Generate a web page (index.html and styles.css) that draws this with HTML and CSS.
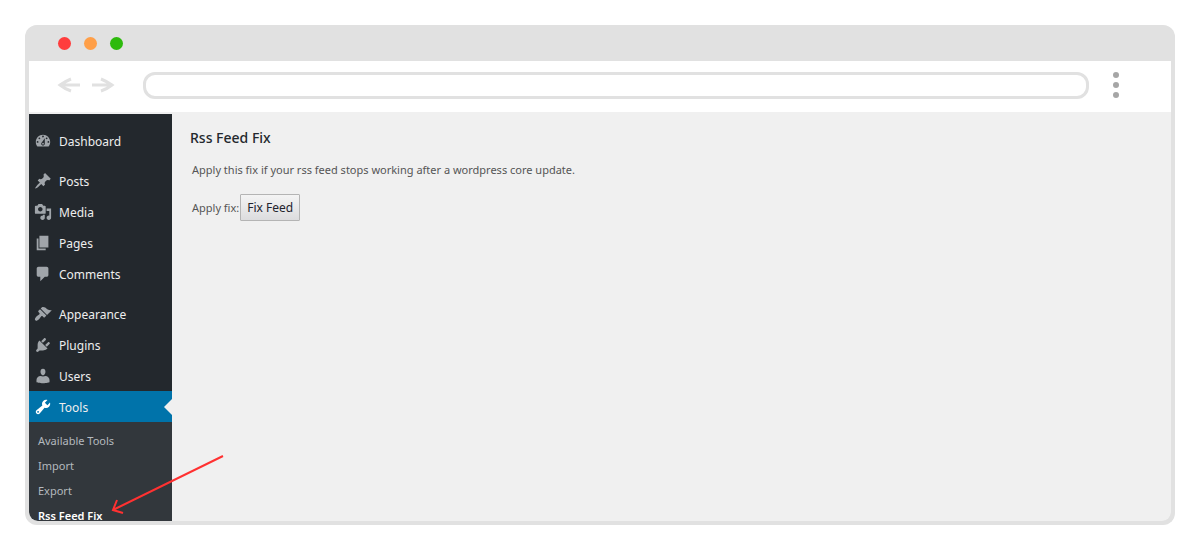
FILE: index.html
```html
<!DOCTYPE html>
<html lang="en">
<head>
  <meta charset="UTF-8">
  <meta name="viewport" content="width=device-width, initial-scale=1.0">
  <title>Rss Feed Fix</title>
  <link rel="stylesheet" href="styles.css">
</head>
<body>
  <div class="browser">
    <div class="titlebar">
      <span class="light red"></span>
      <span class="light orange"></span>
      <span class="light green"></span>
    </div>

    <div class="toolbar">
      <button class="nav" type="button" aria-label="Back">
        <svg width="24" height="16" viewBox="0 0 24 16"><path d="M23 8H3M14 2 Q9 4 3 8 Q8 12 14 14"/></svg>
      </button>
      <button class="nav" type="button" aria-label="Forward">
        <svg width="24" height="16" viewBox="0 0 24 16"><path d="M1 8H21M10 2 Q15 4 21 8 Q16 12 10 14"/></svg>
      </button>
      <input class="address" type="text" aria-label="Address">
      <button class="more" type="button" aria-label="More">
        <span></span><span></span><span></span>
      </button>
    </div>

    <div class="page">
      <nav class="sidebar">
        <ul class="menu">
          <li><a href="#">
            <svg viewBox="0 0 20 20"><path fill-rule="evenodd" d="M3.760 16h12.480c1.100-1.370 1.760-3.110 1.760-5 0-4.420-3.580-8-8-8s-8 3.580-8 8c0 1.890.66 3.630 1.760 5zM10 4c.55 0 1 .45 1 1s-.45 1-1 1-1-.45-1-1 .45-1 1-1zM6 6c.55 0 1 .45 1 1s-.45 1-1 1-1-.45-1-1 .45-1 1-1zm8 0c.55 0 1 .45 1 1s-.45 1-1 1-1-.45-1-1 .45-1 1-1zm-5.370 5.550L12 7v6c0 1.100-.9 2-2 2s-2-.9-2-2c0-.57.24-1.080.63-1.450zM4 10c.55 0 1 .45 1 1s-.45 1-1 1-1-.45-1-1 .45-1 1-1zm12 0c.55 0 1 .45 1 1s-.45 1-1 1-1-.45-1-1 .45-1 1-1zm-5 3c0-.55-.45-1-1-1s-1 .45-1 1 .45 1 1 1 1-.45 1-1z"/></svg>
            Dashboard</a></li>
          <li class="group"><a href="#">
            <svg viewBox="0 0 20 20"><path d="M10.440 3.020l1.820-1.820 6.360 6.350-1.830 1.820c-1.050-.68-2.480-.57-3.410.36l-.75.75c-.92.93-1.040 2.350-.35 3.410l-1.830 1.820-2.410-2.410-2.800 2.790c-.42.42-3.380 2.710-3.800 2.290s1.860-3.390 2.280-3.810l2.790-2.790L4.100 9.360l1.830-1.820c1.050.69 2.480.57 3.400-.36l.75-.75c.93-.92 1.050-2.350.36-3.410z"/></svg>
            Posts</a></li>
          <li><a href="#">
            <svg viewBox="0 0 20 20"><path fill-rule="evenodd" d="M13 11V4c0-.55-.45-1-1-1h-1.670L9 1H5L3.670 3H2c-.55 0-1 .45-1 1v7c0 .55.45 1 1 1h10c.55 0 1-.45 1-1zM7 4.500c1.380 0 2.500 1.120 2.500 2.500S8.380 9.500 7 9.500 4.500 8.380 4.500 7 5.620 4.500 7 4.500zM14 6h5v10.500c0 1.380-1.120 2.500-2.500 2.500S14 17.880 14 16.500s1.120-2.500 2.500-2.500c.17 0 .34.02.5.05V9h-3V6zm-4 8.050V13h2v3.500c0 1.380-1.120 2.500-2.500 2.500S7 17.880 7 16.500 8.120 14 9.500 14c.17 0 .34.02.5.05z"/></svg>
            Media</a></li>
          <li><a href="#">
            <svg viewBox="0 0 20 20"><path d="M6 15V2h10v13H6zm-1 1h8v2H3V5h2v11z"/></svg>
            Pages</a></li>
          <li><a href="#">
            <svg viewBox="0 0 20 20"><path d="M5 2h9c1.100 0 2 .9 2 2v7c0 1.100-.9 2-2 2h-2l-5 5v-5H5c-1.100 0-2-.9-2-2V4c0-1.100.9-2 2-2z"/></svg>
            Comments</a></li>
          <li class="group"><a href="#">
            <svg viewBox="0 0 20 20"><path d="M14.480 11.060L7.410 3.990l1.500-1.500c.5-.56 2.300-.47 3.510.32 1.210.8 1.430 1.280 2.910 2.100 1.180.64 2.450 1.260 4.450.85zm-.71.71L6.700 4.700 4.930 6.470c-.39.39-.39 1.020 0 1.410l1.060 1.060c.39.39.39 1.030 0 1.420-.6.6-1.430 1.110-2.210 1.690-.35.26-.7.53-1.010.84C1.430 14.230.4 16.080 1.400 17.070c.99 1 2.840-.03 4.180-1.360.31-.31.58-.66.85-1.020.57-.78 1.080-1.610 1.690-2.210.39-.39 1.020-.39 1.410 0l1.060 1.060c.39.39 1.020.39 1.410 0z"/></svg>
            Appearance</a></li>
          <li><a href="#">
            <svg viewBox="0 0 20 20"><path d="M13.110 4.360L9.870 7.600 8 5.730l3.240-3.240c.35-.34 1.050-.2 1.560.32.52.51.66 1.210.31 1.550zm-8 1.770l.91-1.120 9.010 9.010-1.190.84c-.71.71-2.630 1.160-3.820 1.160H6.140L4.900 17.260c-.59.59-1.540.59-2.120 0-.59-.58-.59-1.530 0-2.120l1.240-1.240v-3.880c0-1.130.4-3.190 1.090-3.890zm7.260 3.970l3.240-3.240c.34-.35 1.040-.21 1.550.31.52.51.66 1.210.31 1.550l-3.240 3.250z"/></svg>
            Plugins</a></li>
          <li><a href="#">
            <svg viewBox="0 0 20 20"><path d="M10 9.250c-2.270 0-2.730-3.440-2.730-3.440C7 4.020 7.820 2 9.970 2c2.160 0 2.980 2.020 2.710 3.810 0 0-.41 3.440-2.680 3.440zM10 10.600L12.720 10c2.390 0 4.520 2.330 4.520 4.530v2.490s-3.650 1.130-7.240 1.130c-3.650 0-7.240-1.130-7.240-1.130v-2.490c0-2.250 1.940-4.530 4.520-4.530z"/></svg>
            Users</a></li>
          <li class="current"><a href="#">
            <svg viewBox="0 0 20 20"><path fill-rule="evenodd" d="M16.680 9.770c-1.340 1.340-3.300 1.670-4.950.99l-5.410 6.520c-.99.99-2.590.99-3.580 0s-.99-2.590 0-3.570l6.520-5.420c-.68-1.650-.35-3.610.99-4.950 1.280-1.280 3.120-1.620 4.720-1.060l-2.890 2.890 2.820 2.820 2.860-2.870c.53 1.580.18 3.390-1.080 4.650zM3.810 16.210c.4.39 1.040.39 1.430 0 .4-.4.4-1.040 0-1.430-.39-.4-1.030-.4-1.430 0-.39.39-.39 1.030 0 1.430z"/></svg>
            Tools</a></li>
        </ul>
        <ul class="submenu">
          <li><a href="#">Available Tools</a></li>
          <li><a href="#">Import</a></li>
          <li><a href="#">Export</a></li>
          <li><a class="active" href="#">Rss Feed Fix</a></li>
        </ul>
        <!-- pointer to the plugin's menu entry -->
        <svg class="pointer" width="116" height="62" viewBox="0 0 116 62"><path d="M113 3L3 57M7 47L3 57L13 60"/></svg>
      </nav>

      <main class="content">
        <h1>Rss Feed Fix</h1>
        <p>Apply this fix if your rss feed stops working after a wordpress core update.</p>
        <form class="fix">
          <label for="fix-feed">Apply fix:</label>
          <button id="fix-feed" type="button">Fix Feed</button>
        </form>
      </main>
    </div>
  </div>
</body>
</html>
```

FILE: styles.css
```css
* {
  box-sizing: border-box;
}

body {
  margin: 0;
  padding: 25px 25px 30px;
  background: #fff;
  font-family: "Noto Sans", "Open Sans", sans-serif;
  font-size: 12px;
}

ul {
  list-style: none;
  margin: 0;
  padding: 0;
}

a {
  text-decoration: none;
}

button {
  font-family: inherit;
  cursor: pointer;
}

.browser {
  display: flex;
  flex-direction: column;
  height: calc(100vh - 55px);
  border: 4px solid #e1e1e1;
  border-top: 0;
  border-radius: 12px;
  background: #e1e1e1;
  overflow: hidden;
}

/* window bar */
.titlebar {
  display: flex;
  flex: none;
  align-items: center;
  gap: 13px;
  height: 36px;
  padding-left: 29px;
}

.light {
  width: 13px;
  height: 13px;
  border-radius: 50%;
}

.red { background: #ff3d3d; }
.orange { background: #ff9f48; }
.green { background: #2dba0c; }

.toolbar {
  display: flex;
  flex: none;
  align-items: center;
  height: 51px;
  padding: 0 52px 3px 28px;
  background: #fff;
}

.nav {
  width: 24px;
  height: 16px;
  margin-right: 10px;
  padding: 0;
  border: 0;
  background: none;
}

.nav svg {
  display: block;
  fill: none;
  stroke: #e1e1e1;
  stroke-width: 3;
}

.address {
  flex: 1;
  min-width: 0;
  height: 27px;
  margin: 0 24px 0 18px;
  padding: 0 12px;
  border: 3px solid #e1e1e1;
  border-radius: 12px;
  background: #fff;
  font: inherit;
}

.more {
  display: flex;
  flex-direction: column;
  gap: 4px;
  padding: 0;
  border: 0;
  background: none;
}

.more span {
  width: 6px;
  height: 6px;
  border-radius: 50%;
  background: #a6a6a6;
}

/* admin page */
.page {
  display: flex;
  flex: 1;
  min-height: 0;
  padding-top: 2px;
  border-radius: 0 0 9px 9px;
  background: #f0f0f0;
  overflow: hidden;
}

.sidebar {
  position: relative;
  flex: none;
  width: 143px;
  background: #32373c;
}

.menu {
  padding-top: 11px;
  background: #23282d;
}

.menu a {
  display: flex;
  align-items: center;
  gap: 7px;
  height: 31px;
  padding: 1px 0 0 5px;
  color: #eee;
}

.menu svg {
  width: 18px;
  height: 18px;
  fill: #a0a5aa;
}

.menu .group {
  margin-top: 9px;
}

.menu .current {
  position: relative;
  background: #0073aa;
}

.menu .current svg {
  fill: #fff;
}

.menu .current::after {
  content: "";
  position: absolute;
  top: 8px;
  right: 0;
  border: 8px solid transparent;
  border-left: 0;
  border-right-color: #f0f0f0;
}

.submenu {
  padding-top: 6px;
}

.submenu a {
  display: block;
  padding-left: 9px;
  color: #b4b9be;
  font-size: 11px;
  line-height: 25px;
}

.submenu .active {
  color: #fff;
  font-weight: 600;
}

.pointer {
  position: absolute;
  top: 339px;
  left: 81px;
  fill: none;
  stroke: #ff3131;
  stroke-width: 2;
}

.content {
  flex: 1;
  padding: 14px 18px;
  color: #555;
  font-size: 11px;
}

h1 {
  margin: 0;
  color: #23282d;
  font-size: 14px;
  font-weight: 500;
  line-height: 20px;
}

.content p {
  margin: 12px 2px 14px;
  line-height: 20px;
}

.fix {
  display: flex;
  align-items: center;
  gap: 1px;
  margin-left: 2px;
}

.fix button {
  height: 27px;
  padding: 0 6px;
  border: 1px solid #b4b4b4;
  border-radius: 1px;
  background: linear-gradient(#f4f4f4, #dcdcde);
  color: #23232d;
  font-size: 12px;
}
```
